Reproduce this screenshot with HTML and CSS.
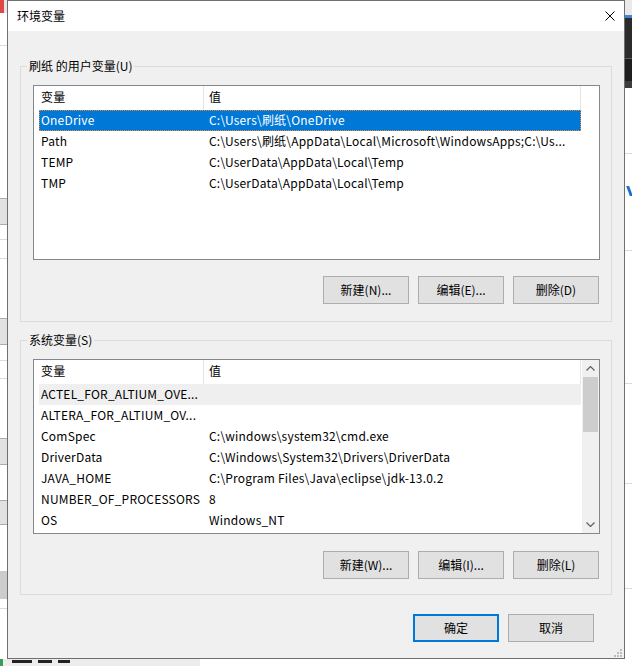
FILE: index.html
```html
<!DOCTYPE html>
<html lang="zh-CN">
<head>
<meta charset="utf-8">
<title>环境变量</title>
<link rel="stylesheet" href="styles.css">
</head>
<body>
<div class="desk">
  <div class="side-left">
    <div class="sl-top"></div>
    <div class="sl-white h32"></div>
    <div class="sl-line"></div>
    <div class="sl-white h152"></div>
    <div class="sl-btn"></div>
    <div class="sl-white h14"></div>
    <div class="sl-line"></div>
    <div class="sl-white h18"></div>
    <div class="sl-line"></div>
    <div class="sl-white h59"></div>
    <div class="sl-btn"></div>
    <div class="sl-white h15"></div>
    <div class="sl-line"></div>
    <div class="sl-white h17"></div>
    <div class="sl-line"></div>
    <div class="sl-white h59"></div>
    <div class="sl-btn"></div>
    <div class="sl-white h35"></div>
    <div class="sl-btn short"></div>
    <div class="sl-white h46"></div>
    <div class="sl-gray"></div>
    <div class="sl-white h9"></div>
    <div class="sl-line"></div>
    <div class="sl-white fill"></div>
  </div>

  <div class="dialog">
    <div class="titlebar">
      <span class="title">环境变量</span>
      <svg class="close" width="10" height="10" viewBox="0 0 10 10"><path d="M0.5 0.5 L9.5 9.5 M9.5 0.5 L0.5 9.5" stroke="#000" stroke-width="1" fill="none"/></svg>
    </div>

    <fieldset class="group g-user">
      <legend>刷纸 的用户变量(U)</legend>
      <div class="group-inner">
        <div class="list">
          <div class="list-main">
            <div class="list-head"><div class="hc hc1">变量</div><div class="hc hc2">值</div></div>
            <div class="row sel"><span class="c1">OneDrive</span><span class="c2">C:\Users\刷纸\OneDrive</span></div>
            <div class="row"><span class="c1">Path</span><span class="c2">C:\Users\刷纸\AppData\Local\Microsoft\WindowsApps;C:\Us...</span></div>
            <div class="row"><span class="c1">TEMP</span><span class="c2">C:\UserData\AppData\Local\Temp</span></div>
            <div class="row"><span class="c1">TMP</span><span class="c2">C:\UserData\AppData\Local\Temp</span></div>
          </div>
        </div>
        <div class="btnrow">
          <button class="btn">新建(N)...</button>
          <button class="btn">编辑(E)...</button>
          <button class="btn">删除(D)</button>
        </div>
      </div>
    </fieldset>

    <fieldset class="group g-sys">
      <legend>系统变量(S)</legend>
      <div class="group-inner">
        <div class="list">
          <div class="list-main">
            <div class="list-head"><div class="hc hc1">变量</div><div class="hc hc2">值</div></div>
            <div class="row hover"><span class="c1">ACTEL_FOR_ALTIUM_OVE...</span><span class="c2"></span></div>
            <div class="row"><span class="c1">ALTERA_FOR_ALTIUM_OV...</span><span class="c2"></span></div>
            <div class="row"><span class="c1">ComSpec</span><span class="c2">C:\windows\system32\cmd.exe</span></div>
            <div class="row"><span class="c1">DriverData</span><span class="c2">C:\Windows\System32\Drivers\DriverData</span></div>
            <div class="row"><span class="c1">JAVA_HOME</span><span class="c2">C:\Program Files\Java\eclipse\jdk-13.0.2</span></div>
            <div class="row"><span class="c1">NUMBER_OF_PROCESSORS</span><span class="c2">8</span></div>
            <div class="row"><span class="c1">OS</span><span class="c2">Windows_NT</span></div>
          </div>
          <div class="scrollbar">
            <div class="arrow"><svg width="9" height="5" viewBox="0 0 9 5"><path d="M0.5 4.5 L4.5 0.5 L8.5 4.5" fill="none" stroke="#606060" stroke-width="1.2"/></svg></div>
            <div class="thumb"></div>
            <div class="track"></div>
            <div class="arrow"><svg width="9" height="5" viewBox="0 0 9 5"><path d="M0.5 0.5 L4.5 4.5 L8.5 0.5" fill="none" stroke="#606060" stroke-width="1.2"/></svg></div>
          </div>
        </div>
        <div class="btnrow sys">
          <button class="btn">新建(W)...</button>
          <button class="btn">编辑(I)...</button>
          <button class="btn">删除(L)</button>
        </div>
      </div>
    </fieldset>

    <div class="footer">
      <button class="btn ok">确定</button>
      <button class="btn">取消</button>
    </div>

    <svg class="grip" width="9" height="9" viewBox="0 0 9 9">
      <rect x="7" y="1" width="2" height="2" fill="#bdbdbd"/>
      <rect x="4" y="4" width="2" height="2" fill="#bdbdbd"/>
      <rect x="7" y="4" width="2" height="2" fill="#bdbdbd"/>
      <rect x="1" y="7" width="2" height="2" fill="#bdbdbd"/>
      <rect x="4" y="7" width="2" height="2" fill="#bdbdbd"/>
      <rect x="7" y="7" width="2" height="2" fill="#bdbdbd"/>
    </svg>
  </div>

  <div class="side-right">
    <div class="sr-a"></div>
    <div class="sr-blue"></div>
    <div class="sr-dark"></div>
    <div class="sr-mid"></div>
    <div class="sr-dark2"></div>
    <div class="sr-gray"></div>
    <div class="sr-white h65"></div>
    <div class="sr-line"></div>
    <div class="sr-white h30"></div>
    <div class="sr-mark"></div>
    <div class="sr-white h52"></div>
    <div class="sr-line"></div>
    <div class="sr-white h132"></div>
    <div class="sr-line"></div>
    <div class="sr-white h99"></div>
    <div class="sr-line"></div>
    <div class="sr-white h104"></div>
    <div class="sr-line"></div>
    <div class="sr-white fill"></div>
  </div>
</div>
<div class="bottom">
  <div class="b-left"><span class="b-green"></span><span class="b-dark w20"></span><span class="b-gap"></span><span class="b-dark w14"></span><span class="b-gap"></span><span class="b-dark w12"></span></div>
  <div class="b-right"></div>
</div>
</body>
</html>
```

FILE: styles.css
```css
html, body {
  margin: 0;
  padding: 0;
}
body {
  width: 632px;
  height: 666px;
  overflow: hidden;
  background: #ffffff;
  font-family: "Noto Sans CJK SC", "Noto Sans", sans-serif;
  font-size: 12px;
  color: #000;
}

.desk {
  display: grid;
  grid-template-columns: 7px 618px 7px;
  height: 659px;
}

/* left background strip */
.side-left {
  display: flex;
  flex-direction: column;
  overflow: hidden;
  background: #fff;
}
.sl-top { height: 13px; background: linear-gradient(90deg, #e04848 0 4px, #e6e6e6 4px); }
.sl-white { background: #fff; }
.sl-line { height: 1px; background: #dcdcdc; }
.sl-btn { height: 27px; background: #e1e1e1; border-top: 1px solid #adadad; border-bottom: 1px solid #adadad; box-sizing: border-box; }
.sl-btn.short { height: 25px; }
.sl-gray { height: 28px; background: #cccccc; }
.h9 { height: 9px; } .h14 { height: 14px; } .h15 { height: 15px; } .h17 { height: 17px; } .h18 { height: 18px; }
.h32 { height: 32px; } .h35 { height: 35px; } .h46 { height: 46px; } .h59 { height: 59px; } .h152 { height: 152px; }
.fill { flex: 1; }

/* dialog window */
.dialog {
  position: relative;
  box-sizing: border-box;
  height: 659px;
  border: 1px solid #6f6f6f;
  background: #f0f0f0;
  display: flex;
  flex-direction: column;
}
.titlebar {
  height: 30px;
  flex: none;
  background: #ffffff;
  display: flex;
  align-items: center;
  justify-content: space-between;
  padding: 0 9px 1px 9px;
  box-sizing: border-box;
}
.title { font-size: 12px; line-height: 16px; }
.close { display: block; }

.group {
  margin: 27px 12px 0;
  padding: 0;
  border: 1px solid #dcdcdc;
  min-width: 0;
}
.group legend {
  margin-left: 6px;
  padding: 0 2px 1px;
  font-size: 12px;
  line-height: 15px;
}
.group-inner {
  padding: 11px 11px 17px 12px;
}
.g-sys { margin-top: 10px; }
.g-sys .group-inner { padding-bottom: 15px; }

.list {
  height: 175px;
  box-sizing: border-box;
  border: 1px solid #828790;
  background: #ffffff;
  display: flex;
  letter-spacing: 0.2px;
}
.list-main {
  flex: 1;
  min-width: 0;
  display: flex;
  flex-direction: column;
}
.list-head {
  height: 24px;
  flex: none;
  width: 547px;
  box-sizing: border-box;
  border-right: 1px solid #e5e5e5;
  display: grid;
  grid-template-columns: 170px 1fr;
}
.hc {
  line-height: 22px;
  padding-bottom: 2px;
  white-space: nowrap;
}
.hc1 { padding-left: 7px; border-right: 1px solid #e5e5e5; }
.hc2 { padding-left: 5px; }

.row {
  height: 21px;
  flex: none;
  margin-left: 5px;
  width: 542px;
  box-sizing: border-box;
  display: grid;
  grid-template-columns: 164px 1fr;
  line-height: 19px;
  padding-bottom: 2px;
}
.row span {
  white-space: nowrap;
  overflow: hidden;
}
.c1 { padding-left: 2px; }
.c2 { padding-left: 6px; }
.row.sel {
  background: #0078d7;
  color: #ffffff;
  outline: 1px dotted #f08a30;
  outline-offset: -1px;
}
.row.hover { background: #efefef; }

.scrollbar {
  width: 17px;
  flex: none;
  background: #f0f0f0;
  display: flex;
  flex-direction: column;
}
.arrow {
  height: 17px;
  flex: none;
  display: flex;
  align-items: center;
  justify-content: center;
}
.arrow svg { display: block; }
.thumb {
  height: 55px;
  flex: none;
  margin: 0 1px 0 1px;
  background: #cdcdcd;
}
.track { flex: 1; }

.btnrow {
  display: flex;
  justify-content: flex-end;
  gap: 9px;
  margin-top: 16px;
  padding-right: 1px;
}
.btnrow.sys { margin-top: 17px; }

.btn {
  width: 86px;
  height: 28px;
  box-sizing: border-box;
  border: 1px solid #adadad;
  background: #e1e1e1;
  font-family: "Noto Sans CJK SC", "Noto Sans", sans-serif;
  font-size: 12px;
  line-height: 16px;
  color: #000;
  padding: 0 0 1px;
  margin: 0;
}
.btn.ok { border: 2px solid #0078d7; }

.footer {
  display: flex;
  justify-content: flex-end;
  gap: 9px;
  margin-top: 19px;
  padding-right: 30px;
}

.grip {
  position: absolute;
  right: 2px;
  bottom: 1px;
}

/* right background strip */
.side-right {
  display: flex;
  flex-direction: column;
  overflow: hidden;
  background: #fff;
}
.sr-a { height: 15px; background: #e9e9e9; }
.sr-blue { height: 3px; background: #3a86d8; }
.sr-dark { height: 40px; background: #2b2b2b; }
.sr-mid { height: 1px; background: #5a5a5a; }
.sr-dark2 { height: 22px; background: #1e1e1e; }
.sr-gray { height: 7px; background: #3c3c3c; }
.sr-white { background: #fff; }
.sr-line { height: 1px; background: #d9d9d9; }
.sr-mark { height: 10px; margin: 2px 0 2px 3px; width: 3px; background: #1a6fd0; transform: skewX(20deg); }
.h30 { height: 30px; } .h52 { height: 52px; } .h65 { height: 65px; } .h99 { height: 99px; } .h104 { height: 104px; } .h132 { height: 132px; }

/* bottom background strip */
.bottom {
  height: 7px;
  display: flex;
  overflow: hidden;
}
.b-left {
  width: 200px;
  background: #ececec;
  display: flex;
  overflow: hidden;
  padding-left: 0;
}
.b-green { width: 3px; background: #3c9a5a; }
.b-dark { height: 3px; margin-top: 1px; background: #222; }
.b-gap { width: 6px; }
.w20 { width: 20px; margin-left: 9px; }
.w14 { width: 14px; }
.w12 { width: 12px; }
.b-right { flex: 1; background: #ffffff; }
```
